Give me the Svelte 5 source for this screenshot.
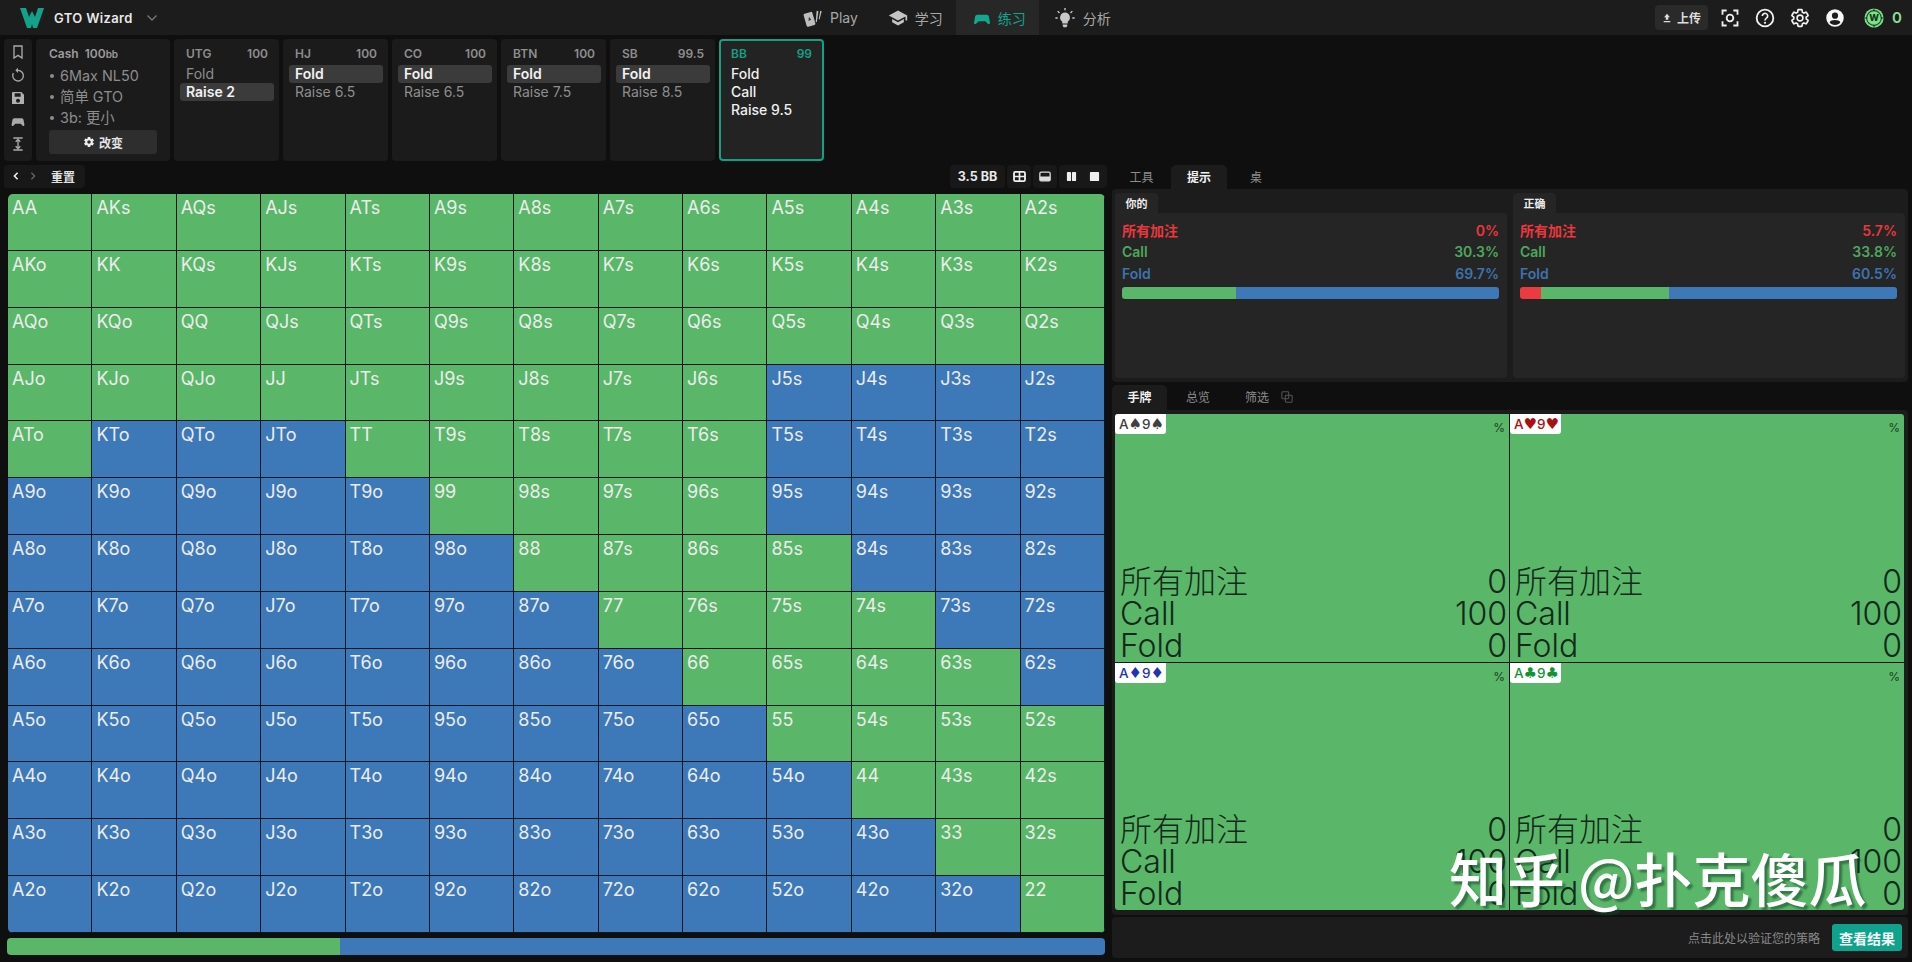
<script>
  const ranks = ['A','K','Q','J','T','9','8','7','6','5','4','3','2'];
  const greenSpans = [[[0,12]],[[0,12]],[[0,12]],[[0,8]],[[0,0],[4,8]],[[5,8]],[[6,9]],[[7,10]],[[8,11]],[[9,12]],[[10,12]],[[11,12]],[[12,12]]];
  const cells = [];
  ranks.forEach((r, i) => ranks.forEach((c, j) => {
    const label = i === j ? r + c : i < j ? r + c + 's' : c + r + 'o';
    const green = greenSpans[i].some(([a, b]) => j >= a && j <= b);
    cells.push({ label, green });
  }));
  const positions = [
    { name:'UTG', stack:'100', rows:[['Fold',false],['Raise 2',true]] },
    { name:'HJ', stack:'100', rows:[['Fold',true],['Raise 6.5',false]] },
    { name:'CO', stack:'100', rows:[['Fold',true],['Raise 6.5',false]] },
    { name:'BTN', stack:'100', rows:[['Fold',true],['Raise 7.5',false]] },
    { name:'SB', stack:'99.5', rows:[['Fold',true],['Raise 8.5',false]] },
  ];
  const verdicts = [
    { title:'你的', vals:['0%','30.3%','69.7%'], bar:[0,30.3,69.7] },
    { title:'正确', vals:['5.7%','33.8%','60.5%'], bar:[5.7,33.8,60.5] },
  ];
  const hands = [
    { s:'♠', cls:'spade' },
    { s:'♥', cls:'heart' },
    { s:'♦', cls:'diamond' },
    { s:'♣', cls:'club' },
  ];
  const pad = 'M8 16 5 19c-.6.6-1.5.6-2.1 0-.5-.4-.7-1-.5-1.6l1.2-6.4A3 3 0 0 1 6.6 8h10.8a3 3 0 0 1 3 3l1.2 6.4c.2.6 0 1.2-.5 1.6-.6.6-1.5.6-2.1 0l-3-3H8z';
  const gear = 'M12,15.5A3.5,3.5 0 0,1 8.5,12A3.5,3.5 0 0,1 12,8.5A3.5,3.5 0 0,1 15.5,12A3.5,3.5 0 0,1 12,15.5M19.43,12.97C19.47,12.65 19.5,12.33 19.5,12C19.5,11.67 19.47,11.34 19.43,11L21.54,9.37C21.73,9.22 21.78,8.95 21.66,8.73L19.66,5.27C19.54,5.05 19.27,4.96 19.05,5.05L16.56,6.05C16.04,5.66 15.5,5.32 14.87,5.07L14.5,2.42C14.46,2.18 14.25,2 14,2H10C9.75,2 9.54,2.18 9.5,2.42L9.13,5.07C8.5,5.32 7.96,5.66 7.44,6.05L4.95,5.05C4.73,4.96 4.46,5.05 4.34,5.27L2.34,8.73C2.21,8.95 2.27,9.22 2.46,9.37L4.57,11C4.53,11.34 4.5,11.67 4.5,12C4.5,12.33 4.53,12.65 4.57,12.97L2.46,14.63C2.27,14.78 2.21,15.05 2.34,15.27L4.34,18.73C4.46,18.95 4.73,19.03 4.95,18.95L7.44,17.94C7.96,18.34 8.5,18.68 9.13,18.93L9.5,21.58C9.54,21.82 9.75,22 10,22H14C14.25,22 14.46,21.82 14.5,21.58L14.87,18.93C15.5,18.67 16.04,18.34 16.56,17.94L19.05,18.95C19.27,19.03 19.54,18.95 19.66,18.73L21.66,15.27C21.78,15.05 21.73,14.78 21.54,14.63L19.43,12.97Z';
</script>

<div class="app">
  <header class="top">
    <div class="brand">
      <svg class="logo" viewBox="0 0 24 20"><path d="M0 0h6l3 9 3-6 3 6 3-9h6l-7 20h-4l-1-4-1 4H7z" fill="#12a28a"/></svg>
      <span class="brand-name">GTO Wizard</span>
      <svg class="chev" viewBox="0 0 12 8"><path d="M1.5 1.5 6 6l4.5-4.5" fill="none" stroke="#777" stroke-width="1.3"/></svg>
    </div>
    <nav class="nav">
      <div class="nav-item">
        <svg viewBox="0 0 22 22" width="20" height="20"><g fill="#bdbdbd"><rect x="2" y="5" width="10" height="15" rx="1.5" transform="rotate(-16 7 12)"/><path d="M15 3l2 .6-1.8 12-1.2-.4zM19 3l1.6.6-2.4 9-.9-.3z"/></g><path d="M6.6 9.5 9 13l-3 1.2z" fill="#333"/></svg>
        <span>Play</span>
      </div>
      <div class="nav-item">
        <svg viewBox="0 0 24 24" width="20" height="20"><path d="M12 3 1 9l11 6 9-4.9V15h2V9L12 3zM5 13.2v4L12 21l7-3.8v-4L12 17l-7-3.8z" fill="#c4c4c4"/></svg>
        <span>学习</span>
      </div>
      <div class="nav-item active">
        <svg viewBox="0 0 24 24" width="20" height="20"><path d={pad} fill="#14a78f"/></svg>
        <span>练习</span>
      </div>
      <div class="nav-item last">
        <svg viewBox="0 0 24 24" width="22" height="22"><path d="M12 6a5.5 5.5 0 0 0-3 10v2h6v-2a5.5 5.5 0 0 0-3-10zM9.5 19h5v1.5l-1 1.5h-3l-1-1.5z" fill="#c8c8c8"/><path d="M12 1v2.5M4 4.5 6 6.500M20 4.500 18 6.500M1.500 12H4M20 12h2.500" stroke="#c8c8c8" stroke-width="1.500"/></svg>
        <span>分析</span>
      </div>
    </nav>
    <div class="top-right">
      <div class="upload">
        <svg viewBox="0 0 12 12" width="10" height="10"><path d="M6 1 2.500 5H4.500v3h3V5h2zM2 9.500h8V11H2z" fill="#ddd"/></svg>
        <span>上传</span>
      </div>
      <svg class="ti" viewBox="0 0 24 24"><path d="M3 8V3h5M16 3h5v5M21 16v5h-5M8 21H3v-5" fill="none" stroke="#eee" stroke-width="2.200"/><circle cx="12" cy="12" r="4" fill="none" stroke="#eee" stroke-width="2.200"/></svg>
      <svg class="ti" viewBox="0 0 24 24"><circle cx="12" cy="12" r="10" fill="none" stroke="#f2f2f2" stroke-width="2.200"/><path d="M8.800 9.500a3.200 3.200 0 1 1 5 2.700c-1.200.8-1.800 1.500-1.800 2.800" fill="none" stroke="#f2f2f2" stroke-width="2"/><circle cx="12" cy="17.800" r="1.300" fill="#f2f2f2"/></svg>
      <svg class="ti" viewBox="0 0 24 24"><path d={gear} fill="none" stroke="#f2f2f2" stroke-width="2"/></svg>
      <svg class="ti" viewBox="0 0 24 24"><path d="M12 1.500a10.500 10.500 0 1 0 0 21 10.500 10.500 0 0 0 0-21zm0 4a3.700 3.700 0 1 1 0 7.400 3.700 3.700 0 0 1 0-7.400zm0 15c-2.800 0-5.200-1.300-6.500-3.300.6-1.700 3.800-2.700 6.500-2.700s5.900 1 6.500 2.700c-1.300 2-3.700 3.300-6.500 3.300z" fill="#f7f7f7"/></svg>
      <div class="coin">
        <svg viewBox="0 0 24 24" width="22" height="22"><circle cx="12" cy="12" r="10.500" fill="#7fe08a"/><circle cx="12" cy="12" r="8" fill="none" stroke="#1b4d28" stroke-width="1.200"/><path d="M12 1.500v3M12 19.500v3M1.500 12h3M19.500 12h3" stroke="#1b1b1b" stroke-width="1"/><text x="12" y="15.500" text-anchor="middle" font-size="10" font-weight="800" fill="#14361d" font-family="Inter">W</text></svg>
        <span>0</span>
      </div>
    </div>
  </header>

  <section class="strip">
    <div class="side">
      <svg viewBox="0 0 24 24"><path d="M6 3h12v18l-6-4-6 4z" fill="none" stroke="#aaa" stroke-width="2"/></svg>
      <svg viewBox="0 0 24 24"><path d="M12 5a8 8 0 1 1-7 4.200" fill="none" stroke="#aaa" stroke-width="2"/><path d="M12 1v8L8 5z" fill="#aaa"/></svg>
      <svg viewBox="0 0 24 24"><path d="M4 3h13l4 4v14H3V4zM7 5v5h9V5zm5 8a3 3 0 1 0 0 6 3 3 0 0 0 0-6z" fill="#b0b0b0" fill-rule="evenodd"/></svg>
      <svg viewBox="0 0 24 24"><path d={pad} fill="#aaa"/></svg>
      <svg viewBox="0 0 24 24"><path d="M5 3h14M5 21h14M12 6v12M8.500 8.500 12 5l3.500 3.500M8.500 15.500 12 19l3.500-3.500" fill="none" stroke="#aaa" stroke-width="2"/></svg>
    </div>
    <div class="card cash">
      <div class="cash-head">Cash&nbsp; 100<small>bb</small></div>
      <ul>
        <li>6Max NL50</li>
        <li>简单 GTO</li>
        <li>3b: 更小</li>
      </ul>
      <div class="change">
        <svg viewBox="0 0 24 24" width="12" height="12"><path d={gear} fill="#eee"/></svg>
        <span>改变</span>
      </div>
    </div>
    {#each positions as p}
      <div class="card pos">
        <div class="pos-head"><span>{p.name}</span><span>{p.stack}</span></div>
        {#each p.rows as [t, sel]}
          <div class="pos-row" class:sel>{t}</div>
        {/each}
      </div>
    {/each}
    <div class="card pos current">
      <div class="pos-head"><span>BB</span><span>99</span></div>
      <div class="pos-row lit">Fold</div>
      <div class="pos-row lit">Call</div>
      <div class="pos-row lit">Raise 9.5</div>
    </div>
  </section>

  <main class="body">
    <div class="left">
      <div class="tools">
        <div class="tg nav-arrows">
          <svg viewBox="0 0 10 12" width="8" height="10"><path d="M7 2 3 6l4 4" fill="none" stroke="#eee" stroke-width="2"/></svg>
          <svg viewBox="0 0 10 12" width="8" height="10"><path d="M3 2l4 4-4 4" fill="none" stroke="#666" stroke-width="1.600"/></svg>
          <span>重置</span>
        </div>
        <div class="tools-right">
          <div class="tg bb">3.5 BB</div>
          <div class="tg ic">
            <svg viewBox="0 0 14 12" width="13" height="11"><rect x="1" y="1" width="12" height="10" rx="1.500" fill="none" stroke="#eee" stroke-width="2"/><path d="M7 1v10M1 6h12" stroke="#eee" stroke-width="1.800"/></svg>
          </div>
          <div class="tg ic">
            <svg viewBox="0 0 14 12" width="12" height="11"><rect x="1" y="1" width="12" height="10" rx="1.500" fill="none" stroke="#ddd" stroke-width="1.500"/><rect x="1" y="6" width="12" height="5" fill="#ddd"/></svg>
          </div>
          <div class="tg ic two">
            <svg viewBox="0 0 12 12" width="11" height="11"><rect x="1" y="1" width="4.500" height="10" rx="1" fill="#eee"/><rect x="6.500" y="1" width="4.500" height="10" rx="1" fill="#eee"/></svg>
            <svg viewBox="0 0 12 12" width="11" height="11"><rect x="1" y="1" width="10" height="10" rx="1" fill="#eee"/></svg>
          </div>
        </div>
      </div>
      <div class="range">
        {#each cells as c}
          <div class="cell" class:green={c.green}>{c.label}</div>
        {/each}
      </div>
      <div class="total"><i class="g" style="width:30.350%"></i><i class="b"></i></div>
    </div>

    <div class="right">
      <div class="tabs upper">
        <div class="tab">工具</div>
        <div class="tab on">提示</div>
        <div class="tab">桌</div>
      </div>
      <div class="verdict">
        {#each verdicts as v}
          <div class="v-col">
            <div class="v-tab">{v.title}</div>
            <div class="v-body">
              <div class="v-row raise"><span>所有加注</span><span>{v.vals[0]}</span></div>
              <div class="v-row call"><span>Call</span><span>{v.vals[1]}</span></div>
              <div class="v-row fold"><span>Fold</span><span>{v.vals[2]}</span></div>
              <div class="v-bar">
                {#if v.bar[0] > 0}<i class="r" style="width:{v.bar[0]}%"></i>{/if}
                <i class="g" style="width:{v.bar[1]}%"></i>
                <i class="b" style="width:{v.bar[2]}%"></i>
              </div>
            </div>
          </div>
        {/each}
      </div>
      <div class="tabs lower">
        <div class="tab on">手牌</div>
        <div class="tab">总览</div>
        <div class="tab filter">筛选
          <svg viewBox="0 0 14 14" width="12" height="12"><rect x="1" y="1" width="8" height="8" rx="1" fill="none" stroke="#555" stroke-width="1.200"/><rect x="5" y="5" width="8" height="8" rx="1" fill="none" stroke="#555" stroke-width="1.200"/></svg>
        </div>
      </div>
      <div class="hands-wrap">
        <div class="hands">
          {#each hands as h}
            <div class="hand">
              <div class="hand-top">
                <div class="chip {h.cls}">A<b>{h.s}</b>9<b>{h.s}</b></div>
                <span class="pct">%</span>
              </div>
              <div class="hand-rows">
                <div><span>所有加注</span><span>0</span></div>
                <div><span>Call</span><span>100</span></div>
                <div><span>Fold</span><span>0</span></div>
              </div>
            </div>
          {/each}
        </div>
        <div class="mark">知乎 @扑克傻瓜</div>
      </div>
      <div class="foot">
        <span>点击此处以验证您的策略</span>
        <button>查看结果</button>
      </div>
    </div>
  </main>
</div>

<style>
  :global(body) { margin: 0; background: #0f0f0f; }
  .app {
    width: 1912px; height: 962px; display: flex; flex-direction: column; overflow: hidden;
    background: #0f0f0f; color: #ddd;
    font-family: Inter, "Noto Sans CJK SC", sans-serif;
  }
  svg { display: block; flex: none; }
  .top { height: 35px; flex: none; background: #1c1c1c; position: relative; display: flex; align-items: center; justify-content: space-between; }
  .brand { display: flex; align-items: center; padding-left: 20px; }
  .logo { width: 24px; height: 20px; }
  .brand-name { margin-left: 10px; font-size: 13px; font-weight: 600; letter-spacing: .35px; color: #e8e8e8; }
  .chev { width: 12px; height: 8px; margin-left: 13px; }
  .nav { position: absolute; left: 786px; top: 0; height: 35px; display: flex; }
  .nav-item { height: 35px; display: flex; align-items: center; gap: 7px; padding: 0 13px 0 17px; font-size: 14px; color: #a8a8a8; }
  .nav-item.active { background: #272727; color: #12a48c; gap: 6px; padding: 0 13px 0 16px; }
  .nav-item.last { padding-left: 15px; }
  .top-right { display: flex; align-items: center; padding-right: 10px; }
  .upload { width: 53px; height: 25px; box-sizing: border-box; background: #2a2a2a; border-radius: 4px; display: flex; align-items: center; justify-content: center; gap: 5px; font-size: 12px; font-weight: 600; color: #ddd; margin-right: 12px; }
  .ti { width: 20px; height: 20px; margin-right: 15px; }
  .coin { display: flex; align-items: center; gap: 7px; margin-left: 3px; color: #8fdc97; font-size: 15px; font-weight: 600; }

  .strip { height: 122px; flex: none; margin-top: 4px; padding-left: 4px; display: flex; gap: 4px; }
  .side { width: 28px; background: #1b1b1b; border-radius: 4px; display: flex; flex-direction: column; align-items: center; padding-top: 5px; box-sizing: border-box; gap: 7px; }
  .side svg { width: 16px; height: 16px; }
  .card { background: #1b1b1b; border-radius: 4px; box-sizing: border-box; }
  .cash { width: 134px; padding: 8px 13px; position: relative; }
  .cash-head { font-size: 12px; font-weight: 600; color: #9c9c9c; line-height: 14px; }
  .cash-head small { font-size: 10px; }
  ul { list-style: none; margin: 4px 0 0; padding: 0; }
  li { font-size: 14.4px; line-height: 21px; color: #8d8d8d; padding-left: 11px; position: relative; }
  li::before { content: ""; position: absolute; left: 1px; top: 9px; width: 4px; height: 4px; border-radius: 50%; background: #8d8d8d; }
  .change { margin-top: 2px; height: 24px; width: 108px; background: #2e2e2e; border-radius: 3px; display: flex; align-items: center; justify-content: center; gap: 4px; font-size: 12px; font-weight: 600; color: #e4e4e4; }

  .pos { width: 105px; padding: 8px 5px 0 6px; }
  .pos-head { display: flex; justify-content: space-between; font-size: 12px; font-weight: 600; color: #8e8e8e; line-height: 14px; padding: 0 6px 0 6px; margin-bottom: 4px; }
  .pos-row { height: 18px; line-height: 18px; font-size: 14px; padding-left: 6px; color: #8e8e8e; border-radius: 3px; }
  .pos-row.sel { background: #3b3b3b; color: #f2f2f2; font-weight: 600; }
  .pos-row.lit { color: #f0f0f0; font-weight: 500; }
  .current { background: #232323; border: 2px solid #14a085; padding: 6px 4px 0 4px; }
  .current .pos-head { color: #14a085; }

  .body { flex: 1; min-height: 0; display: flex; margin-top: 4px; }
  .left { width: 1112px; flex: none; display: flex; flex-direction: column; }
  .tools { height: 23px; display: flex; justify-content: space-between; padding-left: 4px; padding-right: 5px; flex: none; }
  .tg { background: #181818; border-radius: 4px; height: 23px; display: flex; align-items: center; box-sizing: border-box; padding-bottom: 1px; }
  .nav-arrows { width: 81px; padding-left: 8px; gap: 9px; font-size: 12px; font-weight: 600; color: #e2e2e2; }
  .nav-arrows span { margin-left: 5px; }
  .tools-right { display: flex; gap: 2px; }
  .bb { width: 55px; justify-content: center; font-size: 12.5px; font-weight: 700; color: #e8e8e8; }
  .ic { width: 24px; justify-content: center; }
  .ic.two { width: 48px; gap: 12px; }

  .range { margin: 6px 7px 0 8px; height: 739px; flex: none; display: grid; grid-template-columns: repeat(13, 1fr); grid-template-rows: repeat(13, 1fr); border-radius: 5px; overflow: hidden; background: #0e1b26; }
  .cell { background: #3d79b8; box-sizing: border-box; border-right: 1px solid #0d1720; border-bottom: 1px solid #0d1720; padding: 3px 0 0 4px; font-size: 18px; line-height: 22px; color: #ececec; min-width: 0; }
  .cell.green { background: #5ab769; }
  .total { margin: 5px 7px 0 7px; height: 17px; flex: none; display: flex; border-radius: 4px; overflow: hidden; }
  i { display: block; height: 100%; }
  i.g { background: #5ab769; }
  i.b { background: #3d79b8; flex: 1; }
  i.r { background: #ec3b40; }

  .right { flex: 1; min-width: 0; display: flex; flex-direction: column; padding-right: 4px; }
  .tabs { height: 24px; flex: none; display: flex; }
  .tab { width: 58px; display: flex; align-items: center; justify-content: center; font-size: 12px; color: #8c8c8c; border-radius: 5px 5px 0 0; padding-bottom: 2px; box-sizing: border-box; }
  .tab.on { background: #1c1c1c; color: #f0f0f0; font-weight: 600; width: 56px; }
  .upper .tab:first-child { width: 59px; }
  .lower .tab.on { width: 55px; }
  .lower .tab:nth-child(2) { width: 62px; }
  .tab.filter { width: 80px; justify-content: flex-start; padding-left: 16px; gap: 12px; }
  .verdict { height: 193px; flex: none; background: #1c1c1c; border-radius: 4px; box-sizing: border-box; padding: 4px 3px; display: flex; gap: 6px; }
  .v-col { flex: 1; display: flex; flex-direction: column; min-width: 0; }
  .v-tab { width: 43px; height: 20px; flex: none; background: #252525; border-radius: 4px 4px 0 0; display: flex; align-items: center; justify-content: center; font-size: 11px; font-weight: 600; color: #ececec; }
  .v-body { flex: 1; background: #252525; border-radius: 0 4px 4px 4px; padding: 7px 8px 0 7px; }
  .v-row { display: flex; justify-content: space-between; height: 21.3px; line-height: 21px; font-size: 14px; font-weight: 600; }
  .raise { color: #e8383d; }
  .call { color: #4da75c; }
  .fold { color: #3d73ad; }
  .v-bar { margin-top: 3px; height: 12px; display: flex; border-radius: 3px; overflow: hidden; }
  .v-bar i.b { flex: none; }

  .lower { margin-top: 3px; height: 25px; }
  .hands-wrap { flex: none; height: 505px; background: #1c1c1c; box-sizing: border-box; padding: 4px 4px 5px 3px; position: relative; border-radius: 0 4px 4px 4px; }
  .hands { height: 496px; display: grid; grid-template-columns: 1fr 1fr; grid-template-rows: 1fr 1fr; gap: 1px; background: #0d1720; border-radius: 3px; overflow: hidden; }
  .hand { background: #5ab769; display: flex; flex-direction: column; justify-content: space-between; min-width: 0; }
  .hand-top { display: flex; justify-content: space-between; }
  .chip { width: 51px; height: 20px; box-sizing: border-box; padding-left: 4px; background: #fff; border-radius: 0 0 3px 3px; font: 500 13.5px/20px Inter, "DejaVu Sans", sans-serif; white-space: nowrap; }
  .chip b { font: 400 15px/20px "DejaVu Sans", sans-serif; }
  .spade { color: #404040; }
  .heart { color: #a80f0f; }
  .diamond { color: #2233b0; }
  .club { color: #149238; }
  .pct { font-size: 12px; color: #1c3a24; margin: 6px 4px 0 0; }
  .hand-rows { padding: 0 2px 0 5px; color: #13291b; font-size: 32px; font-weight: 300; line-height: 32px; }
  .hand-rows div { display: flex; justify-content: space-between; height: 32px; }
  .mark { position: absolute; left: 337px; top: 432px; font: 500 58px/70px "Noto Sans CJK SC", sans-serif; color: #fff; white-space: nowrap; text-shadow: 3px 3px 2px rgba(20, 70, 40, .55); }
  .foot { margin-top: 2px; height: 41px; flex: none; background: #1c1c1c; border-radius: 4px; display: flex; align-items: center; justify-content: flex-end; padding-right: 6px; gap: 12px; font-size: 12px; color: #8a8a8a; }
  button { width: 70px; height: 27px; border: 0; border-radius: 3px; padding: 0; background: #0fa28c; color: #f4f4f4; font: 700 14px Inter, "Noto Sans CJK SC", sans-serif; }
</style>
